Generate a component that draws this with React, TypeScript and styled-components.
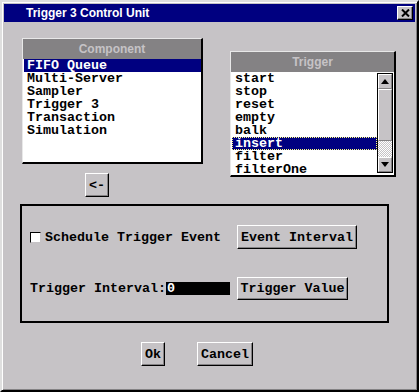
import React from 'react';
import styled, { createGlobalStyle } from 'styled-components';

const GlobalStyle = createGlobalStyle`
  html, body {
    margin: 0;
    padding: 0;
    background: #c6c3c6;
  }
`;

const mono = `'Liberation Mono', 'DejaVu Sans Mono', monospace`;
const sans = `'Liberation Sans', Arial, sans-serif`;

const Window = styled.div`
  width: 419px;
  height: 392px;
  box-sizing: border-box;
  background: #c6c3c6;
  border: 2px solid;
  border-color: #dfdfdf #000 #000 #dfdfdf;
  box-shadow: inset 1px 1px #fff, inset -1px -1px #848284;
  padding: 2px;
  display: flex;
  flex-direction: column;
`;

const TitleBar = styled.div`
  height: 18px;
  background: #000080;
  display: flex;
  align-items: center;
  justify-content: space-between;
  padding: 0 2px 0 22px;
`;

const Title = styled.span`
  font-family: ${sans};
  font-weight: bold;
  font-size: 12px;
  color: #fff;
`;

const CloseButton = styled.div`
  width: 16px;
  height: 14px;
  box-sizing: border-box;
  background: #c6c3c6;
  border: 1px solid;
  border-color: #fff #000 #000 #fff;
  box-shadow: inset -1px -1px #848284;
  display: flex;
  align-items: center;
  justify-content: center;
`;

const Body = styled.div`
  padding: 16px 0 0 16px;
  display: flex;
  flex-direction: column;
`;

const TopRow = styled.div`
  display: flex;
  align-items: flex-start;
`;

const LeftCol = styled.div`
  margin-left: 2px;
  display: flex;
  flex-direction: column;
  align-items: flex-start;
`;

const ListBox = styled.div<{ $w: number; $top?: number; $left?: number }>`
  width: ${(p) => p.$w}px;
  height: 126px;
  margin-top: ${(p) => p.$top || 0}px;
  margin-left: ${(p) => p.$left || 0}px;
  box-sizing: border-box;
  background: #fff;
  border-style: solid;
  border-width: 1px 2px 2px 1px;
  border-color: #e8e8e8 #000 #000 #e8e8e8;
  display: flex;
  flex-direction: column;
  overflow: hidden;
`;

const ListHeader = styled.div`
  height: 20px;
  flex: none;
  background: #848284;
  color: #c6c3c6;
  font-family: ${sans};
  font-weight: bold;
  font-size: 12px;
  display: flex;
  align-items: center;
  justify-content: center;
`;

const ListBody = styled.div`
  flex: 1;
  display: flex;
  min-height: 0;
`;

const Items = styled.div`
  flex: 1;
  display: flex;
  flex-direction: column;
  padding-left: 1px;
`;

const Item = styled.div<{ $selected?: boolean; $focus?: boolean }>`
  height: 13px;
  flex: none;
  box-sizing: border-box;
  line-height: 13px;
  padding-left: 3px;
  font-family: ${mono};
  font-weight: bold;
  font-size: 13.33px;
  white-space: pre;
  color: ${(p) => (p.$selected ? '#fff' : '#000')};
  background: ${(p) => (p.$selected ? '#000080' : 'transparent')};
  outline: ${(p) => (p.$focus ? '1px dotted #ffff80' : 'none')};
  outline-offset: -1px;
`;

const ScrollBar = styled.div`
  width: 16px;
  flex: none;
  margin: 1px 1px 2px 0;
  box-sizing: border-box;
  border: 1px solid #000;
  display: flex;
  flex-direction: column;
`;

const ScrollPart = styled.div<{ $h?: number }>`
  height: ${(p) => (p.$h ? `${p.$h}px` : 'auto')};
  flex: ${(p) => (p.$h ? 'none' : '1')};
  box-sizing: border-box;
  background: #c6c3c6;
  border: 1px solid;
  border-color: #fff #848284 #848284 #fff;
  display: flex;
  align-items: center;
  justify-content: center;
`;

const Track = styled.div`
  height: 16px;
  flex: none;
  background: repeating-conic-gradient(#fff 0 25%, #c6c3c6 0 50%) 0 0 / 2px 2px;
`;

const Button = styled.button<{ $w: number; $h?: number }>`
  width: ${(p) => p.$w}px;
  height: ${(p) => p.$h || 24}px;
  box-sizing: border-box;
  padding: 0;
  background: #c6c3c6;
  border: 1px solid;
  border-color: #fff #000 #000 #fff;
  box-shadow: inset -1px -1px #848284;
  font-family: ${mono};
  font-weight: bold;
  font-size: 13.33px;
  color: #000;
  white-space: pre;
  display: flex;
  align-items: center;
  justify-content: center;
`;

const ArrowButton = styled(Button)`
  margin: 9px 0 0 63px;
`;

const Group = styled.div`
  margin-top: 7px;
  width: 369px;
  height: 119px;
  box-sizing: border-box;
  border: 2px solid #000;
  padding: 19px 0 0 8px;
  display: grid;
  grid-template-columns: 207px auto;
  grid-template-rows: 24px 23px;
  row-gap: 28px;
  align-items: center;
`;

const Field = styled.div`
  display: flex;
  align-items: center;
`;

const Check = styled.span`
  width: 11px;
  height: 11px;
  box-sizing: border-box;
  background: #fff;
  border: 1px solid;
  border-color: #000 #c6c3c6 #c6c3c6 #000;
  margin-right: 4px;
`;

const Label = styled.span`
  font-family: ${mono};
  font-weight: bold;
  font-size: 13.33px;
  color: #000;
  white-space: pre;
`;

const ValueInput = styled.div`
  width: 64px;
  height: 13px;
  background: #000;
  color: #fff;
  font-family: ${mono};
  font-weight: bold;
  font-size: 13.33px;
  line-height: 13px;
  padding-left: 1px;
  box-sizing: border-box;
`;

const Footer = styled.div`
  margin: 19px 0 0 121px;
  display: flex;
  gap: 32px;
`;

const Triangle: React.FC<{ down?: boolean }> = ({ down }) => (
  <svg width="8" height="5" viewBox="0 0 8 5">
    <polygon points={down ? '0,0 8,0 4,5' : '0,5 8,5 4,0'} fill="#000" />
  </svg>
);

const components = ['FIFO Queue', 'Multi-Server', 'Sampler', 'Trigger 3', 'Transaction', 'Simulation'];
const triggers = ['start', 'stop', 'reset', 'empty', 'balk', 'insert', 'filter', 'filterOne'];

const App: React.FC = () => {
  return (
    <>
      <GlobalStyle />
      <Window>
        <TitleBar>
          <Title>Trigger 3 Control Unit</Title>
          <CloseButton>
            <svg width="9" height="8" viewBox="0 0 9 8">
              <path d="M1 0.5 L8 7.5 M8 0.5 L1 7.5" stroke="#000" strokeWidth="2" />
            </svg>
          </CloseButton>
        </TitleBar>
        <Body>
          <TopRow>
            <LeftCol>
              <ListBox $w={181}>
                <ListHeader>Component</ListHeader>
                <Items>
                  {components.map((c, i) => (
                    <Item key={c} $selected={i === 0}>
                      {c}
                    </Item>
                  ))}
                </Items>
              </ListBox>
              <ArrowButton $w={24}>&lt;-</ArrowButton>
            </LeftCol>
            <ListBox $w={166} $top={13} $left={27}>
              <ListHeader>Trigger</ListHeader>
              <ListBody>
                <Items>
                  {triggers.map((t) => (
                    <Item key={t} $selected={t === 'insert'} $focus={t === 'insert'}>
                      {t}
                    </Item>
                  ))}
                </Items>
                <ScrollBar>
                  <ScrollPart $h={15}>
                    <Triangle />
                  </ScrollPart>
                  <ScrollPart />
                  <Track />
                  <ScrollPart $h={15}>
                    <Triangle down />
                  </ScrollPart>
                </ScrollBar>
              </ListBody>
            </ListBox>
          </TopRow>
          <Group>
            <Field>
              <Check />
              <Label>Schedule Trigger Event</Label>
            </Field>
            <Button $w={120}>Event Interval</Button>
            <Field>
              <Label>Trigger Interval:</Label>
              <ValueInput>0</ValueInput>
            </Field>
            <Button $w={111} $h={23}>
              Trigger Value
            </Button>
          </Group>
          <Footer>
            <Button $w={24}>Ok</Button>
            <Button $w={56}>Cancel</Button>
          </Footer>
        </Body>
      </Window>
    </>
  );
};

export default App;
